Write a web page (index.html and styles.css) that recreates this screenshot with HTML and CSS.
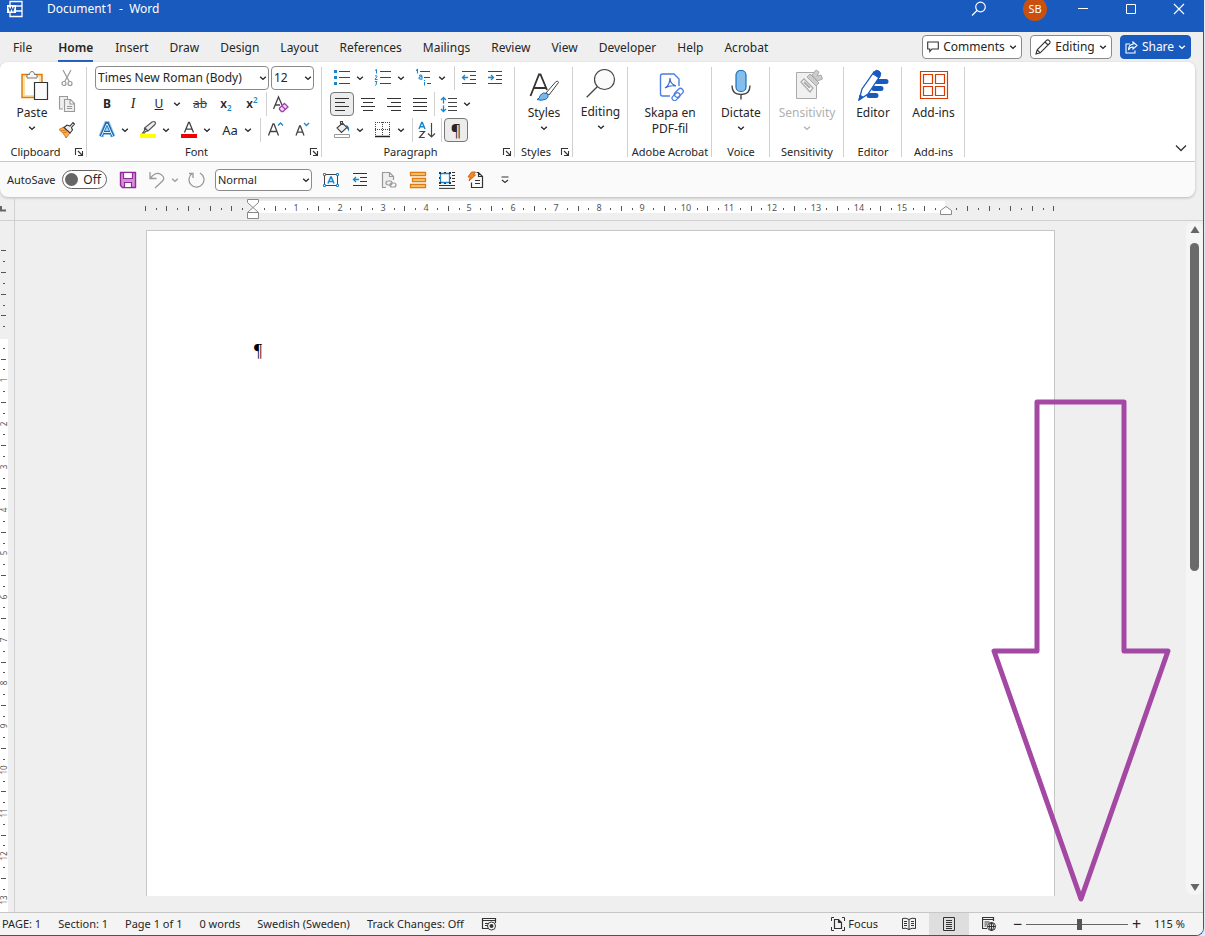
FILE: index.html
```html
<!DOCTYPE html>
<html lang="en">
<head>
<meta charset="utf-8">
<title>Document1 - Word</title>
<link rel="stylesheet" href="styles.css">
</head>
<body>
<svg class="defs" aria-hidden="true">
  <symbol id="chev" viewBox="0 0 8 8"><path d="M1.2 2.7 4 5.4 6.8 2.7" fill="none" stroke="currentColor" stroke-width="1.4"/></symbol>
  <symbol id="launch" viewBox="0 0 10 10"><path d="M1.5 8V1.5H8M4 4l4 4M8.5 4v4.500H4" fill="none" stroke="#333" stroke-width="1.1"/></symbol>
</svg>
<div class="window">
  <header class="titlebar">
    <svg class="app-icon" width="18" height="18" viewBox="0 0 18 18"><path d="M4 5V1.500H16V16.500H4V13M4 6H16M10 11H16" fill="none" stroke="#fff" stroke-width="1.3"/><rect x="1" y="5" width="9" height="8" fill="#fff"/><path d="M2.800 7l1.200 4L5.500 7.500 7 11 8.200 7" fill="none" stroke="#185abd" stroke-width="1.100"/></svg>
    <span class="title">Document1&nbsp; -&nbsp; Word</span>
    <button class="tb-btn" aria-label="Search"><svg width="16" height="16" viewBox="0 0 16 16"><circle cx="9.500" cy="6" r="4.800" fill="none" stroke="#fff" stroke-width="1.200"/><path d="M6 9.500 1 14.500" stroke="#fff" stroke-width="1.200"/></svg></button>
    <button class="avatar">SB</button>
    <button class="win-btn" aria-label="Minimize"><svg width="12" height="12" viewBox="0 0 12 12"><path d="M1 5.500h10" stroke="#fff"/></svg></button>
    <button class="win-btn" aria-label="Maximize"><svg width="12" height="12" viewBox="0 0 12 12"><path d="M1.500 1.500h9v9h-9z" fill="none" stroke="#fff"/></svg></button>
    <button class="win-btn" aria-label="Close"><svg width="12" height="12" viewBox="0 0 12 12"><path d="M1 1l10 10M11 1 1 11" stroke="#fff" stroke-width="1.200"/></svg></button>
  </header>

  <nav class="tabs">
    <a href="#file" class="tab">File</a><a href="#home" class="tab active">Home</a><a href="#insert" class="tab">Insert</a><a href="#draw" class="tab">Draw</a><a href="#design" class="tab">Design</a><a href="#layout" class="tab">Layout</a><a href="#references" class="tab">References</a><a href="#mailings" class="tab">Mailings</a><a href="#review" class="tab">Review</a><a href="#view" class="tab">View</a><a href="#developer" class="tab">Developer</a><a href="#help" class="tab">Help</a><a href="#acrobat" class="tab">Acrobat</a>
    <div class="actions">
      <button class="action comments"><svg width="12" height="12" viewBox="0 0 12 12"><path d="M.7 1h10.600v7H5L2.800 10.500V8H.7z" fill="none" stroke="#333" stroke-width="1.100"/></svg><span>Comments</span><svg class="chev"><use href="#chev"/></svg></button>
      <button class="action editing"><svg width="16" height="16" viewBox="0 0 16 16"><path d="M1 15l1.200-4.200L11.500 1.500a1.600 1.600 0 0 1 2.500 0l.5.500a1.600 1.600 0 0 1 0 2.500L5.200 13.800zM10 3l3 3M2.200 10.800l3 3" fill="none" stroke="#333" stroke-width="1.100"/></svg><span>Editing</span><svg class="chev"><use href="#chev"/></svg></button>
      <button class="action share"><svg width="13" height="13" viewBox="0 0 13 13"><path d="M5 3H1v9h9V9.500M8 1l4 3.500-4 3.500V6C5.500 6 4.300 7 3.500 9c0-3 1.500-5.500 4.500-5.800z" fill="none" stroke="#fff" stroke-width="1.100"/></svg><span>Share</span><svg class="chev"><use href="#chev"/></svg></button>
    </div>
  </nav>

  <section class="panel">
    <div class="ribbon">
      <div class="group clipboard">
        <div class="content">
          <button class="big"><svg width="30" height="32" viewBox="0 0 30 32"><path d="M3 5.500h20v23H3z" fill="#fce0a0" stroke="#e07b10" stroke-width="1.500"/><path d="M6 8h14v18H6z" fill="#fff"/><path d="M8 9V5.500h2.500c0-4 5-4 5 0H18V9z" fill="#f6f6f6" stroke="#777"/><path d="M15.500 13.500h13v17h-13z" fill="#fafafa" stroke="#333" stroke-width="1.200"/></svg><span>Paste</span><svg class="chev"><use href="#chev"/></svg></button>
          <div class="stack">
            <button class="ic" aria-label="Cut"><svg width="16" height="18" viewBox="0 0 16 18"><path d="M4 1l6.500 12M12 1 5.500 13" stroke="#999" stroke-width="1.200"/><circle cx="5" cy="14.500" r="2" fill="none" stroke="#999" stroke-width="1.200"/><circle cx="11" cy="14.500" r="2" fill="none" stroke="#999" stroke-width="1.200"/></svg></button>
            <button class="ic" aria-label="Copy"><svg width="18" height="18" viewBox="0 0 18 18"><path d="M5 14H1.500V1.500h8V4M6.500 4.500h6l4 4v8h-10zM12 4.500V9h4.500M9 11.500h5M9 13.500h5" fill="#eee" stroke="#999" stroke-width="1.100"/></svg></button>
            <button class="ic" aria-label="Format Painter"><svg width="18" height="18" viewBox="0 0 18 18"><path d="M1 8.500 6 6l6 6-4 5c-1-3-4-6-7-8.500z" fill="#f6b25b" stroke="#d9730d"/><path d="M3 10l5-1M5 12l4-1" stroke="#d9730d"/><path d="M6 6.500 9 4l3 1 3-3.500 1.500 1.500L13.500 6.500l1 2.500L12 12z" fill="#eee" stroke="#333" stroke-width="1.100"/></svg></button>
          </div>
        </div>
        <div class="label"><span>Clipboard</span><button class="launcher" aria-label="Clipboard options"><svg width="10" height="10"><use href="#launch"/></svg></button></div>
      </div>

      <div class="group font">
        <div class="content rows">
          <div class="row selects">
            <div class="combo family"><select aria-label="Font"><option>Times New Roman (Body)</option></select><svg class="chev"><use href="#chev"/></svg></div>
            <div class="combo size"><select aria-label="Font size"><option>12</option></select><svg class="chev"><use href="#chev"/></svg></div>
          </div>
          <div class="row">
            <button class="ic bold">B</button><button class="ic ital">I</button>
            <button class="split"><span class="ic under">U</span><svg class="chev"><use href="#chev"/></svg></button>
            <button class="ic strike gap">ab</button>
            <button class="ic script"><span>x<sub>2</sub></span></button><button class="ic script"><span>x<sup>2</sup></span></button>
            <i class="sep"></i>
            <button class="ic" aria-label="Clear formatting"><svg width="18" height="18" viewBox="0 0 18 18"><path d="M1.500 14 6.500 2 10 10M3.500 10H8" fill="none" stroke="#444" stroke-width="1.300"/><path d="M7.500 13 12.500 8.500l3.500 3.500-5 4.500H9.500l-2-2zM10 11l3.500 3.500" fill="#f3e3f5" stroke="#a33fb0" stroke-width="1.300"/></svg></button>
          </div>
          <div class="row splits">
            <button class="split" aria-label="Text effects"><svg class="ic" viewBox="0 0 26 26"><path d="M7 19.500 12.500 6.500h1L19 19.500M9.300 15.500h7.400" fill="none" stroke="#8cc0ea" stroke-width="5"/><path d="M7 19.500 12.500 6.500h1L19 19.500M9.300 15.500h7.400" fill="none" stroke="#1767b0" stroke-width="3"/><path d="M7.200 19.500 12.700 7h.6L18.800 19.500M9.300 15.500h7.400" fill="none" stroke="#e8f3fc"/></svg><svg class="chev"><use href="#chev"/></svg></button>
            <button class="split" aria-label="Highlight"><svg class="ic" viewBox="0 0 26 26"><path d="M5 17h16v4H5z" fill="#ff0"/><path d="M7.500 16l2-2.500v-2.500L17 5q2-1 3 0t0 2.500L13 14l-2.500.5L9.500 16zM10 11l3 3" fill="#eee" stroke="#555" stroke-width="1.200"/></svg><svg class="chev"><use href="#chev"/></svg></button>
            <button class="split" aria-label="Font color"><svg class="ic" viewBox="0 0 26 26"><path d="M5 17h16v4H5z" fill="#f00000"/><path d="M8.500 15.500 12.600 5.500h.8l4.100 10M10 12.200h6" fill="none" stroke="#444" stroke-width="1.300"/></svg><svg class="chev"><use href="#chev"/></svg></button>
            <button class="split"><span class="ic case">Aa</span><svg class="chev"><use href="#chev"/></svg></button>
            <i class="sep wide"></i>
            <div class="pair">
              <button class="ic" aria-label="Grow font"><svg width="26" height="26" viewBox="0 0 26 26"><path d="M6.500 18.500 11 7h1l4.500 11.500M8.200 14.500h6.600" fill="none" stroke="#444" stroke-width="1.300"/><path d="M16 8.500 18.500 6 21 8.500" fill="none" stroke="#1a86d0" stroke-width="1.300"/></svg></button>
              <button class="ic" aria-label="Shrink font"><svg width="26" height="26" viewBox="0 0 26 26"><path d="M8 18.500 11.600 9h.8L16 18.500M9.300 15.200h5.400" fill="none" stroke="#444" stroke-width="1.300"/><path d="M16 6 18.500 8.500 21 6" fill="none" stroke="#1a86d0" stroke-width="1.300"/></svg></button>
            </div>
          </div>
        </div>
        <div class="label"><span>Font</span><button class="launcher" aria-label="Font options"><svg width="10" height="10"><use href="#launch"/></svg></button></div>
      </div>

      <div class="group para">
        <div class="content rows">
          <div class="row splits">
            <button class="split" aria-label="Bullets"><svg class="ic" viewBox="0 0 26 26"><path d="M5 5h3v3H5zM5 11h3v3H5zM5 17h3v3H5z" fill="#1a86d0"/><path d="M10 6.500h11M10 12.500h11M10 18.500h11" stroke="#444"/></svg><svg class="chev"><use href="#chev"/></svg></button>
            <button class="split" aria-label="Numbering"><svg class="ic" viewBox="0 0 26 26"><path d="M5 5.500l1.500-1v4M5 11q2-1 2 .5L5 14.500h2.500M5 16.500h2L6 18q2 1-1 2.500" fill="none" stroke="#1a86d0"/><path d="M10 6.500h11M10 12.500h11M10 18.500h11" stroke="#444"/></svg><svg class="chev"><use href="#chev"/></svg></button>
            <button class="split" aria-label="Multilevel list"><svg class="ic" viewBox="0 0 26 26"><path d="M5 5.500l1.500-1v4M8 10.500q3-1 3 1V14q-3 .5-3-1t3-1.500M13.500 15v1M13.500 17v3.500" fill="none" stroke="#1a86d0" stroke-width="1.100"/><path d="M9 6.500h10M13 12.500h6M16 18.500h4" stroke="#444"/></svg><svg class="chev"><use href="#chev"/></svg></button>
            <i class="sep wide"></i>
            <div class="pair">
              <button class="ic" aria-label="Decrease indent"><svg width="26" height="26" viewBox="0 0 26 26"><path d="M6 6.500h14M14 10.500h6M14 14.500h6M6 18.500h14" stroke="#444"/><path d="M12 12.500H6.500M9 10l-2.500 2.500L9 15" fill="none" stroke="#1a86d0" stroke-width="1.300"/></svg></button><button class="ic" aria-label="Increase indent"><svg width="26" height="26" viewBox="0 0 26 26"><path d="M6 6.500h14M14 10.500h6M14 14.500h6M6 18.500h14" stroke="#444"/><path d="M6 12.500h5.500M9 10l2.500 2.500L9 15" fill="none" stroke="#1a86d0" stroke-width="1.300"/></svg></button>
            </div>
          </div>
          <div class="row">
            <button class="ic on" aria-label="Align left"><svg width="16" height="16" viewBox="0 0 16 16"><path d="M1 2.500h14M1 6.500h10M1 10.500h14M1 14.500h10" stroke="#333"/></svg></button><button class="ic" aria-label="Center"><svg width="16" height="16" viewBox="0 0 16 16"><path d="M1 2.500h14M3 6.500h10M1 10.500h14M3 14.500h10" stroke="#333"/></svg></button><button class="ic" aria-label="Align right"><svg width="16" height="16" viewBox="0 0 16 16"><path d="M1 2.500h14M5 6.500h10M1 10.500h14M5 14.500h10" stroke="#333"/></svg></button><button class="ic" aria-label="Justify"><svg width="16" height="16" viewBox="0 0 16 16"><path d="M1 2.500h14M1 6.500h14M1 10.500h14M1 14.500h14" stroke="#333"/></svg></button>
            <i class="sep"></i>
            <button class="split" aria-label="Line spacing"><svg class="ic" viewBox="0 0 26 26"><path d="M12 7.500h9M12 11.500h9M12 15.500h9M12 19.500h9" stroke="#444"/><path d="M7.500 6.500v6M7.500 14.500v6M5 9l2.500-2.500L10 9M5 18l2.500 2.500L10 18" fill="none" stroke="#1a86d0" stroke-width="1.300"/></svg><svg class="chev"><use href="#chev"/></svg></button>
          </div>
          <div class="row">
            <button class="split" aria-label="Shading"><svg class="ic" viewBox="0 0 26 26"><path d="M5.500 17.500h15v3h-15z" fill="#fff" stroke="#999"/><path d="M8 11l5.500-5L18 10.500l-5.500 5zM11.500 8V4.500h2V8" fill="#eee" stroke="#444" stroke-width="1.100"/><path d="M17 8q4 1 3 7-1-3-2-3.500z" fill="#1a6fb8"/></svg><svg class="chev"><use href="#chev"/></svg></button>
            <button class="split gap" aria-label="Borders"><svg class="ic" viewBox="0 0 26 26"><path d="M5 5.500h15M5 12.500h15M5.500 5v14M12.500 5v14M19.500 5v14" fill="none" stroke="#444" stroke-dasharray="1 1"/><path d="M5 19.500h15" stroke="#222" stroke-width="1.500"/></svg><svg class="chev"><use href="#chev"/></svg></button>
            <i class="sep wide"></i>
            <button class="ic" aria-label="Sort"><svg width="26" height="26" viewBox="0 0 26 26"><path d="M5 12 7.700 5.500h.6L11 12M6 9.800h4" fill="none" stroke="#1a86d0" stroke-width="1.500"/><path d="M5.500 14.500h5l-5 6h5.200" fill="none" stroke="#444" stroke-width="1.200"/><path d="M17.500 6v14M14 16.500l3.500 3.500 3.500-3.500" fill="none" stroke="#444" stroke-width="1.200"/></svg></button>
            <i class="sep"></i>
            <button class="ic on pil">¶</button>
          </div>
        </div>
        <div class="label"><span>Paragraph</span><button class="launcher" aria-label="Paragraph options"><svg width="10" height="10"><use href="#launch"/></svg></button></div>
      </div>

      <div class="group styles">
        <div class="content"><button class="big"><svg width="32" height="32" viewBox="0 0 32 32"><path d="M2.500 27 11 5.500h1.500L19 21M5.500 19h12" fill="none" stroke="#333" stroke-width="1.800"/><path d="M18 24 28 12.500q2-1 2.500 1L21 26z" fill="#fff" stroke="#444"/><path d="M9 30.500q3-1 3-4 3-4 7-2 3 4-2 6-4 1.500-8 0z" fill="#7ab8ea" stroke="#1a6fb8"/></svg><span>Styles</span><svg class="chev"><use href="#chev"/></svg></button></div>
        <div class="label"><span>Styles</span><button class="launcher" aria-label="Styles options"><svg width="10" height="10"><use href="#launch"/></svg></button></div>
      </div>
      <div class="group edit">
        <div class="content"><button class="big"><svg width="30" height="30" viewBox="0 0 30 30"><circle cx="18.500" cy="11.500" r="10" fill="#fafafa" stroke="#444" stroke-width="1.200"/><path d="M11.500 18.500.7 29.300" stroke="#444" stroke-width="1.300"/></svg><span>Editing</span><svg class="chev"><use href="#chev"/></svg></button></div>
      </div>
      <div class="group adobe">
        <div class="content"><button class="big"><svg width="30" height="32" viewBox="0 0 30 32"><g transform="translate(2 0)"><path d="M13 27H5.500q-2 0-2-2V7q0-2 2-2H17l5 5v7" fill="none" stroke="#4a7fe0" stroke-width="1.400"/><path d="M8 19q5-3 5-10 0 6 6 8-6-1-11 2z" fill="none" stroke="#3568c8" stroke-width="1.200"/><rect x="17" y="21" width="10" height="5.500" rx="2.700" transform="rotate(-45 22 24)" fill="#fff" stroke="#4a7fe0" stroke-width="1.300"/><rect x="14" y="25" width="9" height="5" rx="2.500" transform="rotate(-45 19 27)" fill="none" stroke="#4a7fe0" stroke-width="1.300"/></g></svg><span>Skapa en<br>PDF-fil</span></button></div>
        <div class="label"><span>Adobe Acrobat</span></div>
      </div>
      <div class="group voice">
        <div class="content"><button class="big"><svg width="24" height="32" viewBox="0 0 24 32"><rect x="7" y="1.500" width="10" height="21" rx="4.500" fill="#83beec" stroke="#1a6fb8" stroke-width="1.200"/><path d="M3 16.500q0 9 9 9t9-9M12 25.500v5" fill="none" stroke="#444" stroke-width="1.400"/></svg><span>Dictate</span><svg class="chev"><use href="#chev"/></svg></button></div>
        <div class="label"><span>Voice</span></div>
      </div>
      <div class="group sens">
        <div class="content"><button class="big" disabled><svg width="32" height="32" viewBox="0 0 32 32"><path d="M5.500 3.500h20v26h-20z" fill="#f0f0f0" stroke="#aaa"/><path d="M10 13l3-3 9 9-3 4z" fill="#fff" stroke="#aaa" stroke-width="1.300"/><path d="M13 13l6 6" stroke="#aaa" stroke-width="2"/><path d="M16 8l3-3 9 9-3 3zM21 6l4-5 3 2-2 4 4-1 1.500 4-5 2z" fill="#ccc" stroke="#aaa"/></svg><span>Sensitivity</span><svg class="chev"><use href="#chev"/></svg></button></div>
        <div class="label"><span>Sensitivity</span></div>
      </div>
      <div class="group editor">
        <div class="content"><button class="big"><svg width="32" height="32" viewBox="0 0 32 32"><path d="M20 12.500h9M17 19.500h7M12 26.500h7" stroke="#185abd" stroke-width="5" stroke-linecap="round"/><path d="M2 31 5 20 17 3l6 4-12 18z" fill="#fff" stroke="#185abd" stroke-width="1.300"/><path d="M17 3q2-3 5-1t1 5l-1 2-6-4zM2 31l1-5 3 2z" fill="#185abd" stroke="#185abd"/></svg><span>Editor</span></button></div>
        <div class="label"><span>Editor</span></div>
      </div>
      <div class="group addins">
        <div class="content"><button class="big"><svg width="30" height="32" viewBox="0 0 30 32"><path d="M1.500 2.500h27v27h-27zM4.500 5.500h9v9h-9zM16.500 5.500h9v9h-9zM4.500 17.500h9v9h-9zM16.500 17.500h9v9h-9z" fill="none" stroke="#d83b01" stroke-width="1.200"/></svg><span>Add-ins</span></button></div>
        <div class="label"><span>Add-ins</span></div>
      </div>
      <button class="collapse" aria-label="Collapse ribbon"><svg width="12" height="8" viewBox="0 0 12 8"><path d="M1 1.500 6 6.500 11 1.500" fill="none" stroke="#333" stroke-width="1.300"/></svg></button>
    </div>

    <div class="qat">
      <label class="autosave" for="autosave">AutoSave</label>
      <span class="toggle"><input type="checkbox" id="autosave"><span>Off</span></span>
      <button class="q save" aria-label="Save"><svg width="18" height="18" viewBox="0 0 18 18"><path d="M1.500 1.500h15v15h-13l-2-2z" fill="#d58fd9" stroke="#8e2a9a" stroke-width="1.400"/><path d="M4.500 1.500h9v6h-9zM5.500 11.500h7v5h-7z" fill="#fff" stroke="#8e2a9a" stroke-width="1.200"/></svg></button>
      <button class="split dim" aria-label="Undo"><svg class="ic" viewBox="0 0 26 26"><path d="M6 5v6.500h6.500M6.500 11Q12 4 17 7.500t1 7L11 21" fill="none" stroke="#999" stroke-width="1.300"/></svg><svg class="chev"><use href="#chev"/></svg></button>
      <button class="q" aria-label="Redo"><svg width="18" height="18" viewBox="0 0 18 18"><path d="M13 2a7.500 7.500 0 1 1-7.500.3M2 2.500h4V7" fill="none" stroke="#999" stroke-width="1.300"/></svg></button>
      <div class="combo style"><select aria-label="Style"><option>Normal</option></select><svg class="chev"><use href="#chev"/></svg></div>
      <button class="q" aria-label="Text box"><svg width="18" height="18" viewBox="0 0 18 18"><path d="M2.500 3.500h13v11h-13z" fill="none" stroke="#444"/><path d="M6 12.500 8.700 6h.6L12 12.500M7 10.500h4" fill="none" stroke="#1a86d0" stroke-width="1.500"/><path d="M1.500 2.500h2v2h-2zM14.500 2.500h2v2h-2zM1.500 13.500h2v2h-2zM14.500 13.500h2v2h-2z" fill="#fff" stroke="#1a86d0"/></svg></button>
      <button class="q" aria-label="Decrease indent"><svg width="18" height="18" viewBox="0 0 18 18"><path d="M2 2.500h14M9 6.500h7M9 10.500h7M2 14.500h14" stroke="#333" stroke-width="1.200"/><path d="M8 8.500H2.500M5 6 2.500 8.500 5 11" fill="none" stroke="#1a86d0" stroke-width="1.300"/></svg></button>
      <button class="q" aria-label="Page link"><svg width="18" height="18" viewBox="0 0 18 18"><path d="M6 16.500H2.500v-15h7l4 4V9M9.500 1.500v4h4" fill="#eee" stroke="#999" stroke-width="1.200"/><rect x="6" y="10" width="6" height="4" rx="2" fill="none" stroke="#999" stroke-width="1.200"/><rect x="10" y="12" width="6" height="4" rx="2" fill="none" stroke="#999" stroke-width="1.200"/></svg></button>
      <button class="q" aria-label="Rows"><svg width="18" height="18" viewBox="0 0 18 18"><path d="M1.500 1.500h15v3h-15zM3.500 7.500h13v3h-13zM1.500 13.500h15v3h-15z" fill="#fcd68a" stroke="#e07b10" stroke-width="1.300"/></svg></button>
      <button class="q" aria-label="Wrap text"><svg width="18" height="18" viewBox="0 0 18 18"><path d="M2.500 2.500h9v9h-9z" fill="#fff" stroke="#1a86d0" stroke-width="1.300"/><path d="M1 1h2v2H1zM6 1h2v1H6zM11 1h2v2h-2zM1 6h1v2H1zM12 6h1v2h-1zM1 11h2v2H1zM6 12h2v1H6zM11 11h2v2h-2z" fill="#333"/><path d="M14 1.500h3M14 4.500h3M14 7.500h3M14 10.500h3M1 14.500h16M1 17.400h16" stroke="#333"/></svg></button>
      <button class="q" aria-label="Quick document"><svg width="18" height="18" viewBox="0 0 18 18"><path d="M4.500 11.500v5h11v-11l-4-4h-2M11.500 1.500v4h4M8 9.500h5M8 12.500h5" fill="none" stroke="#333" stroke-width="1.200"/><path d="M4.500 1h4L6.500 4h2l-6.500 6 1.500-4H1z" fill="#f08a24" stroke="#d9620d"/></svg></button>
      <button class="q" aria-label="Customize toolbar"><svg width="10" height="10" viewBox="0 0 10 10"><path d="M1.500 2h7M2 5l3 2.500L8 5" fill="none" stroke="#333" stroke-width="1.200"/></svg></button>
    </div>
  </section>

  <div class="ruler-row">
    <div class="corner"><svg width="6" height="6" viewBox="0 0 6 6"><path d="M1 0v4.500h5" fill="none" stroke="#666" stroke-width="2"/></svg></div>
    <svg class="hruler" id="hruler"></svg>
  </div>

  <main class="work">
    <svg class="vruler" id="vruler"></svg>
    <div class="canvas"><article class="page"><p>¶</p></article></div>
    <div class="scroll"><svg width="10" height="10" viewBox="0 0 10 10"><path d="M5 1 9.500 8h-9z" fill="#666"/></svg><div class="track"><div class="thumb"></div></div><svg width="10" height="10" viewBox="0 0 10 10"><path d="M5 9 .5 2h9z" fill="#666"/></svg></div>
    <svg class="arrow" width="182" height="508" viewBox="0 0 182 508"><path d="M47 5h87v249h44L91 502 4 254h43z" fill="none" stroke="#a349a4" stroke-width="5" stroke-linejoin="round"/></svg>
  </main>

  <footer class="status">
    <span>PAGE: 1</span><span>Section: 1</span><span>Page 1 of 1</span><span>0 words</span><span>Swedish (Sweden)</span><span>Track Changes: Off</span>
    <svg width="16" height="14" viewBox="0 0 16 14"><path d="M8 11.500H1.500V1.500h13V6M2 3.500h12M4 6.500h4M4 8.500h3" fill="none" stroke="#333" stroke-width="1.200"/><circle cx="10.500" cy="9" r="4" fill="#fff" stroke="#333"/><circle cx="10.500" cy="9" r="2" fill="#333"/></svg>
    <div class="views">
      <button class="focus"><svg width="14" height="14" viewBox="0 0 14 14"><path d="M3 .5H.5V4M.5 10v3.500H3M11 .5h2.500V4M13.500 10v3.500H11" fill="none" stroke="#333"/><path d="M3.500 2.500h4l3 3v6h-7zM7.500 2.500v3h3" fill="none" stroke="#333" stroke-width="1.200"/></svg><span>Focus</span></button>
      <button class="view" aria-label="Read mode"><svg width="14" height="14" viewBox="0 0 14 14"><path d="M7 2.500Q4 .5.500 1.500v10q3.500-1 6.500 1 3-2 6.500-1v-10Q10 .5 7 2.500zv10M2 4.500h3M2 6.500h3M2 8.500h3M9 4.500h3M9 6.500h3M9 8.500h3" fill="none" stroke="#333"/></svg></button>
      <button class="view current" aria-label="Print layout"><svg width="12" height="14" viewBox="0 0 12 14"><path d="M.5.5h11v13H.5zM3 3.500h6M3 5.500h6M3 7.500h6M3 9.500h6M3 11.500h6" fill="none" stroke="#333"/></svg></button>
      <button class="view" aria-label="Web layout"><svg width="14" height="14" viewBox="0 0 14 14"><path d="M5 11.500H.5v-11h11V4M1 2.500h10M2.500 5h5M2.500 7h3M2.500 9h2" fill="none" stroke="#333" stroke-width="1.200"/><circle cx="9.500" cy="9.500" r="4" fill="#fff" stroke="#333"/><path d="M5.500 9.500h8M9.500 5.500v8" stroke="#333"/><ellipse cx="9.500" cy="9.500" rx="2" ry="4" fill="none" stroke="#333"/></svg></button>
      <button class="zoom-btn">−</button><input type="range" min="0" max="100" value="53" aria-label="Zoom"><button class="zoom-btn">+</button><span class="pct">115 %</span>
    </div>
  </footer>
</div>
<script src="rulers.js"></script>
</body>
</html>
```
FILE: styles.css
```css
* { box-sizing: border-box; }
body { margin: 0; padding-right: 1px; height: 100vh; background: #e4e8f0; font: 12px/16px "Noto Sans", "Segoe UI", sans-serif; color: #262626; }
button, select, input { font: inherit; color: inherit; margin: 0; }
button { padding: 0; border: 0; background: none; display: inline-flex; align-items: center; justify-content: center; }
svg { display: block; flex: none; }
.defs { position: absolute; width: 0; height: 0; }
.chev { width: 8px; height: 8px; }
.window { display: flex; flex-direction: column; height: 100%; background: #efefef; border-right: 1px solid #185abd; border-bottom: 1px solid #185abd; border-bottom-right-radius: 8px; overflow: hidden; }

.titlebar { display: flex; align-items: center; height: 32px; flex: none; padding: 0 0 14px 6px; background: #185abd; color: #fff; overflow: hidden; }
.title { margin: 0 auto 0 23px; }
.tb-btn { width: 24px; margin-right: 32px; }
.avatar { width: 24px; height: 24px; margin-right: 12px; border-radius: 50%; background: #ca5010; font-size: 11px; flex: none; }
.win-btn { width: 48px; }

.tabs { display: flex; align-items: center; height: 30px; flex: none; padding: 0 12px 0 13px; gap: 21px; }
.tab { color: inherit; text-decoration: none; padding: 7px 0 4px; border-bottom: 2px solid transparent; line-height: 17px; white-space: nowrap; }
.tab.active { font-weight: 600; border-color: #185abd; margin: 0 1px 0 5px; }
.actions { display: flex; gap: 8px; margin-left: auto; }
.action { height: 24px; gap: 4px; border: 1px solid #8a8a8a; border-radius: 4px; background: #fff; }
.comments { width: 100px; }
.editing { width: 82px; }
.share { width: 71px; background: #185abd; border-color: #185abd; color: #fff; }

.panel { flex: none; margin-right: 8px; border-radius: 8px; background: #fafafa; box-shadow: 0 1px 3px #b8b8b8; overflow: hidden; }
.ribbon { display: flex; height: 100px; padding-top: 3px; background: #fff; border-bottom: 1px solid #c8c8c8; }
.group { position: relative; display: flex; flex-direction: column; flex: none; }
.group::after { content: ""; position: absolute; right: 0; top: 2px; bottom: 4px; width: 1px; background: #d0d0d0; }
.content { display: flex; height: 78px; justify-content: center; }
.rows { flex-direction: column; justify-content: flex-start; padding-left: 7px; }
.row { display: flex; align-items: center; height: 26px; }
.splits { gap: 5px; }
.pair { display: flex; }
.clipboard { width: 87px; }
.clipboard .content { justify-content: flex-start; }
.font { width: 235px; }
.para { width: 193px; }
.styles { width: 58px; }
.edit { width: 55px; }
.adobe { width: 84px; }
.voice { width: 58px; }
.sens { width: 74px; }
.editor { width: 58px; }
.addins { width: 63px; }
.label { display: flex; align-items: center; height: 18px; font-size: 11px; text-align: center; white-space: nowrap; }
.label span { flex: 1; }
.launcher { width: 16px; }
.big { flex-direction: column; justify-content: flex-start; padding-top: 4px; gap: 3px; color: #262626; white-space: nowrap; }
.edit .big, .big > svg:first-child { margin-bottom: 1px; }
.edit .big { padding-top: 3px; }
.edit .big > svg:first-child { margin-bottom: 3px; }
.big:disabled { color: #b0b0b0; }
.clipboard .big { width: 44px; margin-left: 10px; }
.clipboard .big > svg:first-child { margin-left: 4px; }
.stack { display: flex; flex-direction: column; }
.ic { width: 26px; height: 24px; flex: none; }
.stack .ic { height: 26px; }
svg.ic { height: 26px; }
.on { border: 1px solid #777; border-radius: 4px; background: #ececec; width: 24px; margin: 0 1px; }
.split { height: 24px; }
.split .chev { width: 8px; margin-left: 1px; margin-right: 1px; }
.gap { margin-left: 5px; }
.sep { width: 1px; height: 24px; margin: 0 1px; background: #d0d0d0; flex: none; }
.splits .sep.wide { margin: 0 -4px 0 2px; }
.sep.wide { margin: 0 1px 0 6px; }
.bold { font-weight: 700; }
.ital { font: italic 14px "Liberation Serif", serif; }
.under { text-decoration: underline; line-height: 24px; }
.strike { text-decoration: line-through; color: #444; }
.script { font-weight: 600; }
.script sub, .script sup { font-size: 8px; line-height: 8px; color: #1a86d0; }
.case { line-height: 24px; font-size: 13px; }
.pil { font-size: 16px; }
.combo { display: grid; align-items: center; }
.combo > * { grid-area: 1 / 1; }
.combo .chev { justify-self: end; margin-right: 2px; pointer-events: none; }
.combo select { width: 100%; height: 24px; padding: 0 2px; appearance: none; border: 1px solid #8a8a8a; border-radius: 4px; background: #fff; }
.selects { gap: 2px; padding-left: 1px; }
.family { width: 174px; }
.size { width: 43px; }
.collapse { margin: auto 7px 9px auto; width: 14px; }

.qat { display: flex; align-items: center; height: 35px; padding-left: 7px; }
.autosave { width: 55px; font-size: 11px; }
.toggle { display: flex; align-items: center; justify-content: space-between; width: 45px; height: 19px; padding: 0 5px 0 2px; border: 1px solid #666; border-radius: 10px; background: #fff; }
.toggle input { appearance: none; width: 13px; height: 13px; border-radius: 50%; background: #666; }
.q { width: 29px; height: 24px; }
.save { margin-left: 6px; }
.dim { margin: 0 1px 0 2px; color: #999; }
.style { width: 97px; margin: 0 4px 0 5px; }
.combo.style select { height: 22px; font-size: 11px; }

.ruler-row { display: flex; height: 24px; flex: none; border-bottom: 1px solid #d0d0d0; }
.corner { width: 15px; display: flex; align-items: center; border-right: 1px solid #d0d0d0; flex: none; }
.hruler { flex: 1; height: 23px; }
.work { position: relative; display: flex; flex: 1; min-height: 0; }
.vruler { width: 15px; height: 100%; border-right: 1px solid #d0d0d0; }
.vruler text, .hruler text { font-size: 9px; fill: #555; text-anchor: middle; }
.vruler text { font-size: 8px; }
.canvas { flex: 1; display: flex; padding: 9px 131px 16px; }
.page { flex: 1; padding: 110px 107px; background: #fff; border: 1px solid #c6c6c6; border-bottom: 0; }
.page p { margin: 0; font: 18px/21px "Liberation Serif", serif; color: #000; }
.scroll { display: flex; flex-direction: column; align-items: center; width: 17px; margin: 1px 0 17px; padding: 3px 0; border-radius: 8px; background: #f5f5f5; }
.track { flex: 1; width: 9px; padding: 8px 0; }
.thumb { height: 52%; border-radius: 5px; background: #6a6a6a; }
.arrow { position: absolute; right: 31px; top: 176px; }

.status { display: flex; align-items: center; height: 23px; flex: none; padding-left: 2px; gap: 17px; border-top: 1px solid #c6c6c6; background: #f4f4f4; font-size: 11px; white-space: nowrap; }
.views { display: flex; align-items: center; height: 22px; margin-left: auto; }
.focus { gap: 3px; margin-right: 11px; }
.view { width: 40px; height: 22px; }
.current { background: #dedede; }
.zoom-btn { width: 17px; font-size: 16px; }
.status input { appearance: none; width: 102px; height: 12px; background: linear-gradient(#666, #666) center / 100% 1px no-repeat; }
.status input::-webkit-slider-thumb { appearance: none; width: 5px; height: 11px; background: #555; }
.pct { width: 30px; margin: 0 19px 0 9px; }
```
FILE: rulers.js
```js
const NS = "http://www.w3.org/2000/svg";
const CM = 43.27;

function add(svg, name, attrs, text) {
  const el = document.createElementNS(NS, name);
  for (const key in attrs) el.setAttribute(key, attrs[key]);
  if (text) el.textContent = text;
  svg.appendChild(el);
  return el;
}

// Draws quarter dots, half-centimetre ticks and numbers along one axis.
function drawRuler(svg, opts) {
  const at = (pos, across, len) => opts.vertical
    ? { x: across, y: Math.round(pos), width: len, height: 1 }
    : { x: Math.round(pos), y: across, width: 1, height: len };
  for (let q = opts.from; q <= opts.to; q++) {
    if (q === 0 || q === opts.skip) continue;
    const pos = opts.zero + q * CM / 4;
    const inside = q > 0 && (!opts.skip || q < opts.skip);
    if (q % 4 === 0 && inside) {
      const p = Math.round(pos);
      add(svg, "text", opts.vertical
        ? { x: 0, y: 0, transform: `translate(7 ${p}) rotate(-90)` }
        : { x: p, y: 14 }, String(q / 4));
    } else {
      const tick = q % 2 === 0;
      add(svg, "rect", { ...at(pos, opts.line + (tick ? 0 : 2), tick ? 5 : 2), fill: "#555" });
    }
  }
}

const h = document.getElementById("hruler");
add(h, "rect", { x: 238, y: 4, width: 692, height: 12, fill: "#fff" });
drawRuler(h, { zero: 238, from: -10, to: 74, skip: 64, line: 9 });
add(h, "path", { d: "M232.5 2.5h11v3l-5.500 5 5.500 5v6h-11v-6l5.500-5-5.500-5zM232.500 15.500h11", fill: "#fff", stroke: "#888" });
add(h, "path", { d: "M925.500 17.500v-4l5.500-4 5.500 4v4z", fill: "#fff", stroke: "#888" });

const v = document.getElementById("vruler");
const vHeight = v.getBoundingClientRect().height;
const vZero = 116;
add(v, "rect", { x: 0, y: 118, width: 8, height: vHeight - 118, fill: "#fff" });
drawRuler(v, { zero: vZero, from: -8, to: Math.floor((vHeight - 2 - vZero) / (CM / 4)), line: 1, vertical: true });
```
